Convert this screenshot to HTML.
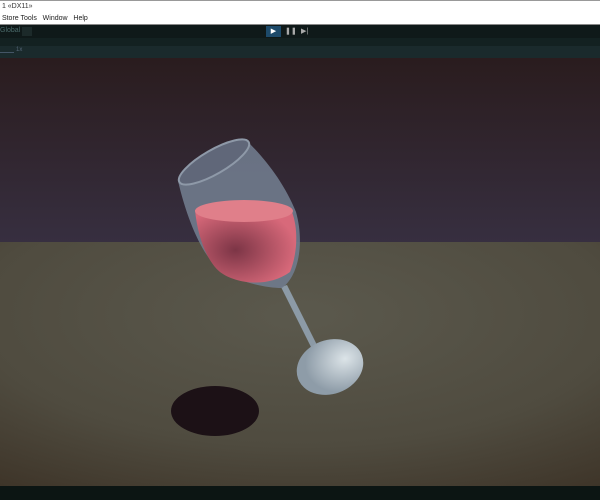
<!DOCTYPE html>
<html><head><style>
body{margin:0;width:600px;height:500px;overflow:hidden;font-family:"Liberation Sans",sans-serif;background:#000}
.t{position:absolute;left:0;width:600px}
</style></head><body>
<div class="t" style="top:0;height:12px;background:#fff;border-top:1px solid #999;box-sizing:border-box;font-size:7px;color:#333;line-height:11px">&nbsp;1 «DX11»</div>
<div class="t" style="top:12px;height:13px;background:#fff;border-bottom:1px solid #888;box-sizing:border-box;font-size:7px;color:#222;line-height:13px">&nbsp;Store Tools &nbsp;&nbsp;Window &nbsp;&nbsp;Help</div>
<div class="t" style="top:25px;height:13px;background:#0f1919">
 <span style="position:absolute;left:0;top:2px;font-size:7px;color:#4a6a6a">Global</span>
 <span style="position:absolute;left:22px;top:2px;width:10px;height:9px;background:#1c2a2a"></span>
 <span style="position:absolute;left:266px;top:1px;width:15px;height:11px;background:#1d4a6a;color:#fff;font-size:7px;text-align:center;line-height:11px">▶</span>
 <span style="position:absolute;left:285px;top:1px;width:11px;height:11px;color:#aaa;font-size:7px;line-height:11px">❚❚</span>
 <span style="position:absolute;left:301px;top:1px;width:11px;height:11px;color:#aaa;font-size:7px;line-height:11px">▶|</span>
</div>
<div class="t" style="top:38px;height:8px;background:#132121"></div>
<div class="t" style="top:46px;height:12px;background:#1a2a2c"><span style="position:absolute;left:0;top:6px;width:14px;height:1px;background:#456"></span><span style="position:absolute;left:16px;top:1px;font-size:6px;color:#567">1x</span></div>
<svg class="t" style="top:58px" width="600" height="428" viewBox="0 58 600 428">
<defs>
<linearGradient id="sky" x1="0" y1="0" x2="0" y2="1"><stop offset="0" stop-color="#2a1c1e"/><stop offset="1" stop-color="#372f40"/></linearGradient>
<radialGradient id="fl" cx="0.5" cy="0.3" r="0.9"><stop offset="0" stop-color="#5b594d"/><stop offset="0.6" stop-color="#4f4b3f"/><stop offset="1" stop-color="#3c3226"/></radialGradient>
<radialGradient id="wine" cx="0.4" cy="0.55" r="0.6"><stop offset="0" stop-color="#7c3546"/><stop offset="1" stop-color="#d8697a"/></radialGradient>
<radialGradient id="ft" cx="0.75" cy="0.45" r="0.6"><stop offset="0" stop-color="#dce4e8"/><stop offset="1" stop-color="#8e9ca8"/></radialGradient>
</defs>
<rect x="0" y="58" width="600" height="185" fill="url(#sky)"/>
<rect x="0" y="242" width="600" height="244" fill="url(#fl)"/>
<ellipse cx="215" cy="411" rx="44" ry="25" fill="#1c1116"/>
<path d="M319 349 L287 285 L281 287 L313 351 Z" fill="#8c9aa6"/>
<ellipse cx="330" cy="367" rx="34" ry="27" transform="rotate(-20 330 367)" fill="url(#ft)"/>
<path d="M178 181 C186 215 198 245 212 262 C225 278 260 288 282 288 C300 275 304 240 296 212 C285 185 268 162 249 143 Z" fill="#707b8d" opacity="0.9"/>
<ellipse cx="214" cy="162" rx="40" ry="12" transform="rotate(-30 214 162)" fill="#606779" stroke="#8e99a8" stroke-width="2"/>
<path d="M195 210 C198 240 208 262 220 272 C236 284 268 288 290 272 C298 252 298 228 292 212 Z" fill="url(#wine)"/>
<ellipse cx="244" cy="211" rx="49" ry="11" fill="#e07f8a"/>
</svg>
<div class="t" style="top:486px;height:14px;background:#0c1513"></div>
</body></html>
